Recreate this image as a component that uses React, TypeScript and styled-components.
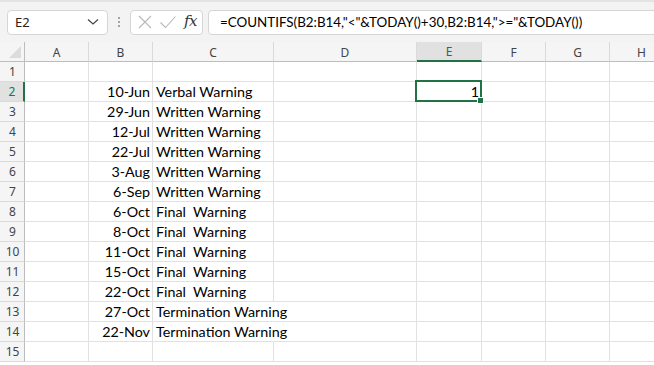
import styled, { createGlobalStyle, css } from 'styled-components';

const GlobalStyle = createGlobalStyle`
  html, body { margin: 0; padding: 0; background: #ffffff; }
  body { width: 654px; height: 365px; overflow: hidden; }
`;

const GREEN = '#217346';

const columns = [
  { name: 'A', width: 64 },
  { name: 'B', width: 64 },
  { name: 'C', width: 121 },
  { name: 'D', width: 143 },
  { name: 'E', width: 65 },
  { name: 'F', width: 64 },
  { name: 'G', width: 64 },
  { name: 'H', width: 64 },
];

const data: [string, string][] = [
  ['', ''],
  ['10-Jun', 'Verbal Warning'],
  ['29-Jun', 'Written Warning'],
  ['12-Jul', 'Written Warning'],
  ['22-Jul', 'Written Warning'],
  ['3-Aug', 'Written Warning'],
  ['6-Sep', 'Written Warning'],
  ['6-Oct', 'Final  Warning'],
  ['8-Oct', 'Final  Warning'],
  ['11-Oct', 'Final  Warning'],
  ['15-Oct', 'Final  Warning'],
  ['22-Oct', 'Final  Warning'],
  ['27-Oct', 'Termination Warning'],
  ['22-Nov', 'Termination Warning'],
  ['', ''],
];

const formula = '=COUNTIFS(B2:B14,"<"&TODAY()+30,B2:B14,">="&TODAY())';

const App = () => {
  return (
    <>
      <GlobalStyle />
      <Sheet>
        <Toolbar>
          <NameBox>
            <span>E2</span>
            <svg width="12" height="8" viewBox="0 0 12 8">
              <path d="M1 1.5 L6 6 L11 1.5" fill="none" stroke="#444" strokeWidth="1.2" />
            </svg>
          </NameBox>
          <Dots>
            <i /><i /><i />
          </Dots>
          <ButtonBox>
            <svg width="16" height="16" viewBox="0 0 16 16">
              <path d="M2 2 L14 14 M14 2 L2 14" stroke="#b8b8b8" strokeWidth="1.1" />
            </svg>
            <svg width="18" height="16" viewBox="0 0 18 16">
              <path d="M1.5 8.5 L6.5 13.5 L16.5 2.5" fill="none" stroke="#b8b8b8" strokeWidth="1.1" />
            </svg>
            <Fx>fx</Fx>
          </ButtonBox>
          <FormulaBox>{formula}</FormulaBox>
        </Toolbar>

        <Grid>
          <Corner>
            <svg width="12" height="12" viewBox="0 0 12 12">
              <path d="M12 0 L12 12 L0 12 Z" fill="#dcdcdc" />
            </svg>
          </Corner>
          {columns.map((c) => (
            <ColHeader key={c.name} $active={c.name === 'E'}>
              {c.name}
            </ColHeader>
          ))}

          {data.map(([date, label], i) => {
            const row = i + 1;
            const overflow = label.length > 16;
            return [
              <RowHeader key={`h${row}`} $active={row === 2}>
                {row}
              </RowHeader>,
              <Cell key={`a${row}`} />,
              <Cell key={`b${row}`} $align="right">{date}</Cell>,
              <Cell key={`c${row}`} $overflow={overflow}>{label}</Cell>,
              <Cell key={`d${row}`} />,
              <Cell key={`e${row}`} $align="right" $selected={row === 2}>
                {row === 2 ? '1' : ''}
              </Cell>,
              <Cell key={`f${row}`} />,
              <Cell key={`g${row}`} />,
              <Cell key={`h2${row}`} />,
            ];
          })}
        </Grid>
      </Sheet>
    </>
  );
};

export default App;

const Sheet = styled.div`
  width: 654px;
  height: 365px;
  overflow: hidden;
  background: #ffffff;
`;

const Toolbar = styled.div`
  height: 42px;
  box-sizing: border-box;
  display: flex;
  align-items: center;
  padding: 0 0 0 7px;
  background: #f3f3f3;
  border-top: 2px solid #e3e3e3;
`;

const NameBox = styled.div`
  width: 101px;
  height: 25px;
  box-sizing: border-box;
  display: flex;
  align-items: center;
  justify-content: space-between;
  padding: 0 8px 0 7px;
  background: #ffffff;
  border: 1px solid #d6d6d6;
  border-radius: 4px;
  font-family: 'Noto Sans', sans-serif;
  font-size: 13px;
  color: #222;
`;

const Dots = styled.div`
  width: 22px;
  display: flex;
  flex-direction: column;
  align-items: center;
  gap: 2px;

  i {
    width: 2px;
    height: 2px;
    background: #8a8a8a;
    border-radius: 1px;
  }
`;

const ButtonBox = styled.div`
  width: 73px;
  height: 25px;
  box-sizing: border-box;
  display: flex;
  align-items: center;
  justify-content: space-between;
  padding: 0 5px 0 6px;
  background: #ffffff;
  border: 1px solid #d6d6d6;
  border-radius: 4px;
`;

const Fx = styled.span`
  font-family: 'DejaVu Serif', 'Liberation Serif', serif;
  font-style: italic;
  font-size: 15px;
  color: #333;
  letter-spacing: -0.5px;
  margin-top: -2px;
`;

const FormulaBox = styled.div`
  flex: 1;
  height: 25px;
  margin-left: 5px;
  margin-right: -10px;
  box-sizing: border-box;
  display: flex;
  align-items: center;
  padding-left: 11px;
  background: #ffffff;
  border: 1px solid #d6d6d6;
  border-radius: 4px;
  font-family: 'Lato', 'Liberation Sans', sans-serif;
  font-size: 13.4px;
  color: #000;
  white-space: pre;
`;

const Grid = styled.div`
  display: grid;
  grid-template-columns: 25px ${columns.map((c) => `${c.width}px`).join(' ')};
  grid-auto-rows: 20px;
  background: #ffffff;
`;

const headerBase = css`
  box-sizing: border-box;
  background: #f5f5f5;
  font-family: 'Noto Sans', 'Open Sans', sans-serif;
  font-size: 12px;
  color: #444;
  display: flex;
  align-items: center;
  justify-content: center;
`;

const Corner = styled.div`
  ${headerBase};
  justify-content: flex-end;
  align-items: flex-end;
  padding: 0 3px 3px 0;
  border-right: 1px solid #bdbdbd;
  border-bottom: 1px solid #bdbdbd;
`;

const ColHeader = styled.div<{ $active?: boolean }>`
  ${headerBase};
  border-right: 1px solid #dadada;
  border-bottom: 1px solid #bdbdbd;
  padding-top: 1px;
  ${(p) =>
    p.$active &&
    css`
      background: #e1e1e1;
      color: ${GREEN};
      border-bottom: 2px solid ${GREEN};
    `}
`;

const RowHeader = styled.div<{ $active?: boolean }>`
  ${headerBase};
  border-right: 1px solid #bdbdbd;
  border-bottom: 1px solid #dadada;
  padding-left: 1px;
  ${(p) =>
    p.$active &&
    css`
      background: #e1e1e1;
      color: ${GREEN};
      border-right: 2px solid ${GREEN};
    `}
`;

const Cell = styled.div<{ $align?: 'left' | 'right'; $overflow?: boolean; $selected?: boolean }>`
  position: relative;
  box-sizing: border-box;
  border-right: 1px solid ${(p) => (p.$overflow ? 'transparent' : '#e1e1e1')};
  border-bottom: 1px solid #e1e1e1;
  padding: 0 2px 0 3px;
  font-family: 'Lato', 'Liberation Sans', sans-serif;
  font-size: 14.3px;
  line-height: 20px;
  color: #000;
  white-space: pre;
  text-align: ${(p) => p.$align ?? 'left'};
  overflow: visible;
  z-index: ${(p) => (p.$overflow || p.$selected ? 1 : 0)};

  ${(p) =>
    p.$selected &&
    css`
      &::after {
        content: '';
        position: absolute;
        top: -2px;
        left: -2px;
        right: -1px;
        bottom: -1px;
        border: 2px solid ${GREEN};
        pointer-events: none;
      }
      &::before {
        content: '';
        position: absolute;
        right: -3px;
        bottom: -3px;
        width: 5px;
        height: 5px;
        background: ${GREEN};
        border: 1px solid #ffffff;
        z-index: 2;
      }
    `}
`;
